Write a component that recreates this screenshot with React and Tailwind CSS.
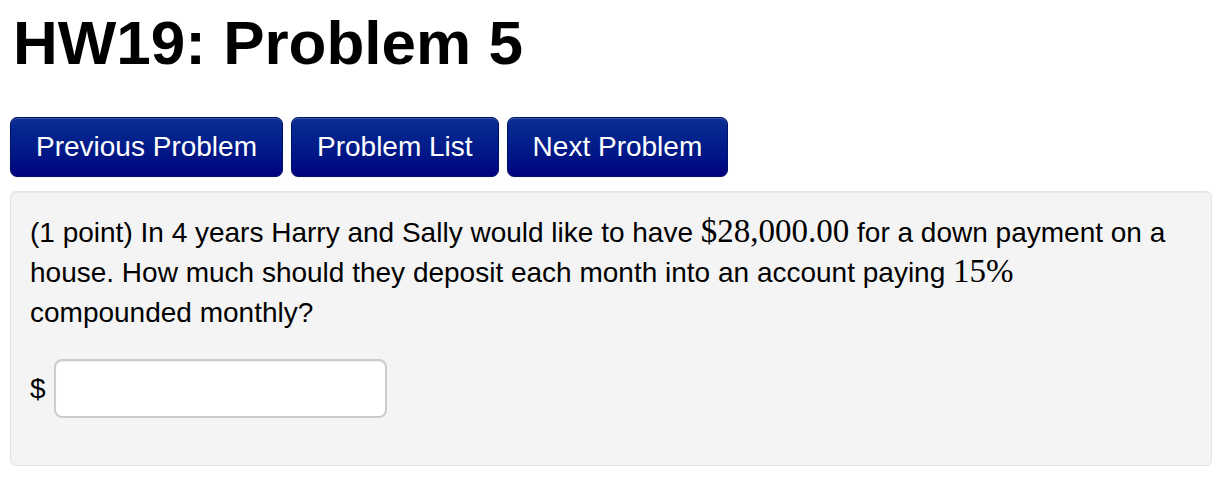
import React from 'react';

const navButtons = ['Previous Problem', 'Problem List', 'Next Problem'];

const Math = ({ children }) => (
  <span className="font-['Liberation_Serif','Times_New_Roman',serif] text-[33px] leading-[28px]">{children}</span>
);

const App = () => {
  return (
    <div className="min-h-[478px] bg-white pl-[10px] pr-[16px] font-['Liberation_Sans',Arial,sans-serif] text-black">
      <h1 className="pt-[9px] pl-[3px] text-[62px] font-bold leading-[68px]">HW19: Problem 5</h1>

      <div className="mt-[40px] flex gap-[8px]">
        {navButtons.map((label) => (
          <button
            key={label}
            className="h-[60px] rounded-[7px] border border-[#00136b] bg-gradient-to-b from-[#0b2d93] to-[#00007f] px-[25px] text-[28px] leading-none text-white shadow-[inset_0_1px_0_rgba(255,255,255,0.2),0_1px_2px_rgba(0,0,0,0.05)]"
          >
            {label}
          </button>
        ))}
      </div>

      <div className="mt-[14px] rounded-[6px] border border-[#e3e3e3] bg-[#f4f4f4] px-[19px] pb-[47px] pt-[21px] shadow-[inset_0_1px_1px_rgba(0,0,0,0.05)]">
        <p className="text-[28px] leading-[40px]">
          (1 point) In 4 years Harry and Sally would like to have <Math>$28,000.00</Math> for a down payment on a
          house. How much should they deposit each month into an account paying <Math>15%</Math>
          <br />
          compounded monthly?
        </p>

        <div className="mt-[26px] flex items-center gap-[8px]">
          <span className="text-[28px] leading-none">$</span>
          <input
            type="text"
            className="h-[59px] w-[333px] rounded-[8px] border-2 border-[#cccccc] bg-white px-3 text-[28px] shadow-[inset_0_1px_1px_rgba(0,0,0,0.075)] outline-none"
          />
        </div>
      </div>
    </div>
  );
};

export default App;
